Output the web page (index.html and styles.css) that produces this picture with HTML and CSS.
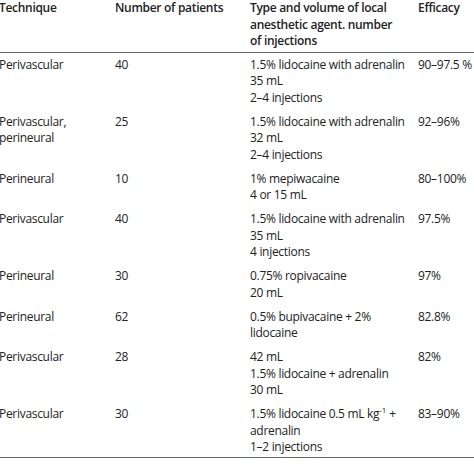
FILE: index.html
```html
<!DOCTYPE html>
<html>
<head>
<meta charset="utf-8">
<link rel="stylesheet" href="styles.css">
</head>
<body>
<table class="tbl">
  <thead>
    <tr>
      <th class="c1">Technique</th>
      <th class="c2">Number of patients</th>
      <th class="c3">Type and volume of local<br>anesthetic agent. number<br>of injections</th>
      <th class="c4">Efficacy</th>
    </tr>
  </thead>
  <tbody>
    <tr><td>Perivascular</td><td>40</td><td>1.5% lidocaine with adrenalin<br>35 mL<br>2–4 injections</td><td>90–97.5 %</td></tr>
    <tr><td>Perivascular,<br>perineural</td><td>25</td><td>1.5% lidocaine with adrenalin<br>32 mL<br>2–4 injections</td><td>92–96%</td></tr>
    <tr><td>Perineural</td><td>10</td><td>1% mepiwacaine<br>4 or 15 mL</td><td>80–100%</td></tr>
    <tr><td>Perivascular</td><td>40</td><td>1.5% lidocaine with adrenalin<br>35 mL<br>4 injections</td><td>97.5%</td></tr>
    <tr><td>Perineural</td><td>30</td><td>0.75% ropivacaine<br>20 mL</td><td>97%</td></tr>
    <tr><td>Perineural</td><td>62</td><td>0.5% bupivacaine + 2%<br>lidocaine</td><td>82.8%</td></tr>
    <tr><td>Perivascular</td><td>28</td><td>42 mL<br>1.5% lidocaine + adrenalin<br>30 mL</td><td>82%</td></tr>
    <tr><td>Perivascular</td><td>30</td><td>1.5% lidocaine 0.5 mL kg<sup>-1</sup> +<br>adrenalin<br>1–2 injections</td><td>83–90%</td></tr>
  </tbody>
</table>
</body>
</html>
```
FILE: styles.css
```css
html, body { margin: 0; padding: 0; background: #fff; }
body { overflow: hidden; }
.tbl {
  border-collapse: collapse;
  width: 475px;
  margin-left: -1px;
  font-family: "Open Sans", sans-serif;
  font-size: 12px;
  letter-spacing: -0.3px;
  line-height: 16.5px;
  color: #222;
  table-layout: fixed;
}
.tbl th, .tbl td {
  text-align: left;
  vertical-align: top;
  padding: 0;
  white-space: nowrap;
}
.tbl th { font-weight: 600; padding-bottom: 2px; border-bottom: 1.5px solid #666; }
.tbl td { padding-top: 4px; padding-bottom: 3.5px; }
.tbl tbody tr:last-child td { border-bottom: 1.5px solid #666; padding-bottom: 1.5px; }
.c1 { width: 116px; }
.c2 { width: 135px; }
.c3 { width: 168px; }
.c4 { width: 56px; }
sup { font-size: 8px; line-height: 0; vertical-align: 5px; letter-spacing: 0; }
```
